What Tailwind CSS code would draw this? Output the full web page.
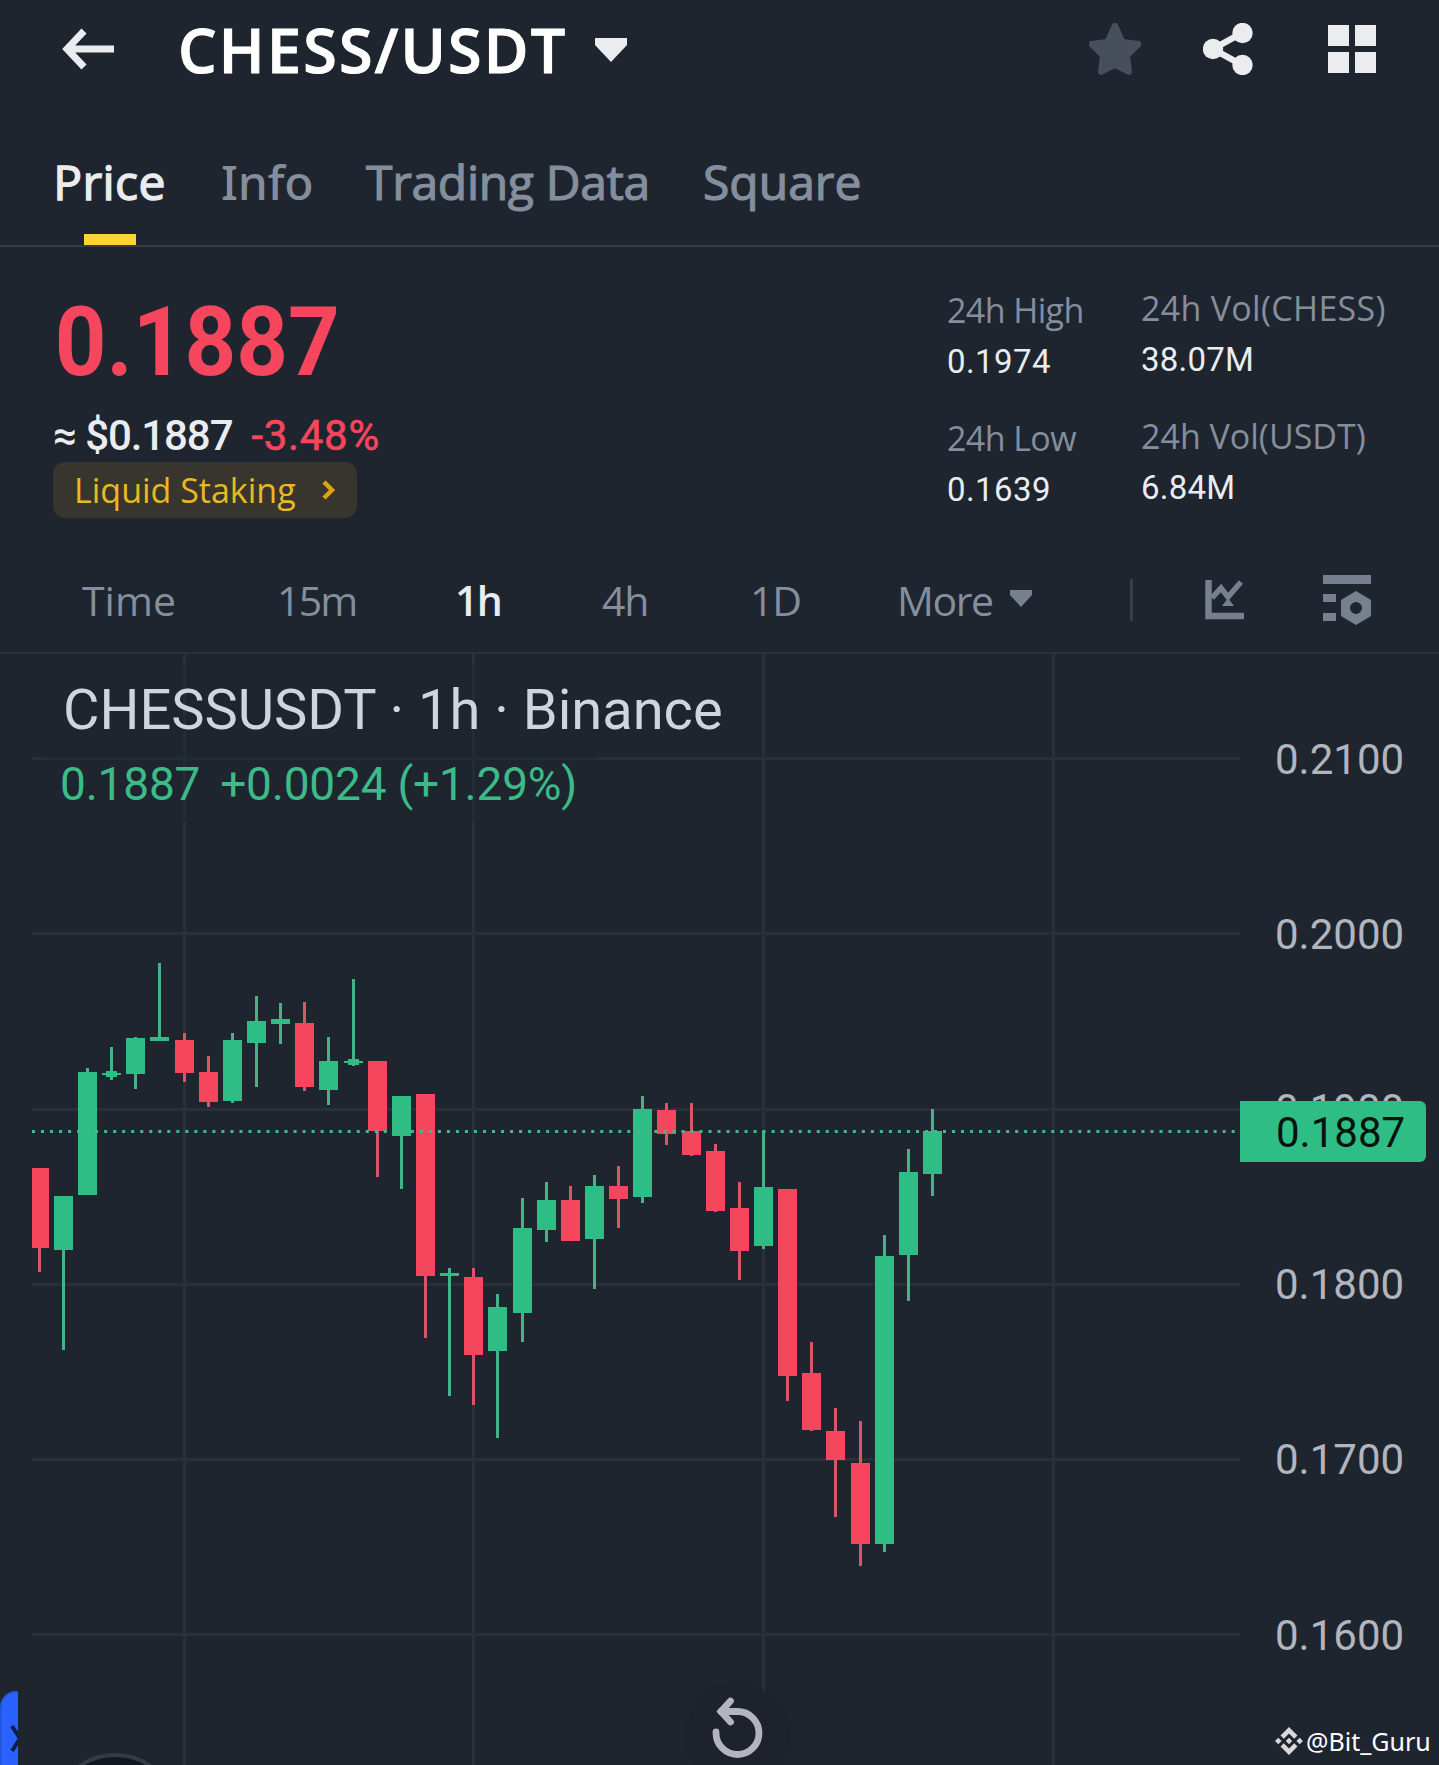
<!DOCTYPE html>
<html lang="en">

<head>
    <meta charset="UTF-8">
    <meta name="viewport" content="width=device-width, initial-scale=1.0">
    <title>CHESS/USDT</title>
    <script src="https://cdn.jsdelivr.net/npm/@tailwindcss/browser@4"></script>
</head>

<body class="bg-[#1f252f] font-['Open_Sans',sans-serif]">
    <div class="w-[1439px] h-[1765px] overflow-hidden flex flex-col whitespace-nowrap leading-none">

        <!-- header -->
        <header class="h-[98px] shrink-0 flex items-center pl-[62px] pr-[63px] text-[#eaecef]">
            <svg class="w-[52px] h-[42px]" viewBox="0 0 52 42" fill="none" stroke="currentColor" stroke-width="7">
                <path d="M52 21H7M22 3L5 21l17 18" />
            </svg>
            <h1 class="ml-[64px] w-[417px] text-[61px] font-semibold text-white tracking-[2.2px] [-webkit-text-stroke:1px_white]">CHESS/USDT</h1>
            <svg class="w-8 h-6 mt-[2px]" viewBox="0 0 32 24" fill="currentColor">
                <path d="M0 0h32v7L16 24 0 7z" />
            </svg>
            <div class="ml-auto flex items-center">
                <svg class="w-[52px] h-[52px] text-[#474f5c]" viewBox="0 0 52 52" fill="currentColor" stroke="currentColor" stroke-width="4" stroke-linejoin="round">
                    <path d="M25 2h2l7 16 16 2v2L39 33l2 16-1 1-14-7-14 7-1-1 2-16L2 22v-2l16-2z" />
                </svg>
                <svg class="ml-[62px] w-[50px] h-[52px]" viewBox="0 0 50 52" fill="currentColor">
                    <path d="M39 10L10 26l29 16" fill="none" stroke="currentColor" stroke-width="6.5" />
                    <circle cx="10" cy="26" r="10.2" />
                    <circle cx="39.5" cy="10" r="10.2" />
                    <circle cx="39.5" cy="42" r="10.2" />
                </svg>
                <div class="ml-[75px] grid grid-cols-2 gap-[6px]">
                    <span class="size-[21px] bg-[#eaecef]"></span>
                    <span class="size-[21px] bg-[#eaecef]"></span>
                    <span class="size-[21px] bg-[#eaecef]"></span>
                    <span class="size-[21px] bg-[#eaecef]"></span>
                </div>
            </div>
        </header>

        <!-- tabs -->
        <nav class="h-[149px] shrink-0 border-b-2 border-[#333b47] pt-[60px] pl-[53px] grid grid-cols-[168px_145px_337px_200px] text-[48px] text-[#848e9c]">
            <div class="w-[113px] flex flex-col items-center justify-between text-[#eaecef]">
                <span class="tracking-[0.4px] [-webkit-text-stroke:1.4px_#eaecef]">Price</span>
                <span class="w-[52px] h-[11px] bg-[#fcd535]"></span>
            </div>
            <span class="font-['Noto_Sans',sans-serif] font-medium tracking-[-0.3px]">Info</span>
            <span class="tracking-[-0.3px] [-webkit-text-stroke:1.2px_#848e9c]">Trading Data</span>
            <span class="[-webkit-text-stroke:1.2px_#848e9c]">Square</span>
        </nav>

        <!-- price + 24h stats -->
        <section class="h-[300px] shrink-0 flex pl-[53px]">
            <div class="w-[894px] pt-[47px] flex flex-col items-start">
                <div class="pl-[2px] origin-left scale-x-93 font-[Roboto,sans-serif] text-[97px] font-bold text-[#f6465d]">0.1887</div>
                <div class="mt-[24px] flex gap-[19px] font-[Roboto,sans-serif] text-[42px] font-medium text-[#eaecef]">
                    <span class="tracking-[-1.1px]">≈ $0.1887</span>
                    <span class="font-normal text-[#f6465d] tracking-[0.7px] [-webkit-text-stroke:0.6px_#f6465d]">-3.48%</span>
                </div>
                <div class="mt-[5px] h-14 w-[304px] rounded-xl bg-[#37352d] flex items-center justify-between pl-[21px] pr-[20px] text-[34px] text-[#e8b923]">
                    <span>Liquid Staking</span>
                    <svg class="w-[16px] h-[20px] text-[#dba50f]" viewBox="0 0 16 20" fill="none" stroke="currentColor" stroke-width="4.5">
                        <path d="M3 2l8 8-8 8" />
                    </svg>
                </div>
            </div>
            <div class="w-[194px] pt-[46px] flex flex-col text-[34px] text-[#848e9c]">
                <span class="tracking-[-0.6px]">24h High</span>
                <span class="mt-[18px] font-[Roboto,sans-serif] text-[33px] tracking-[0.4px] text-[#eaecef]">0.1974</span>
                <span class="mt-[43px] tracking-[-0.6px]">24h Low</span>
                <span class="mt-[18px] font-[Roboto,sans-serif] text-[33px] tracking-[0.4px] text-[#eaecef]">0.1639</span>
            </div>
            <div class="pt-[44px] flex flex-col text-[34px] text-[#848e9c]">
                <span class="tracking-[0.3px]">24h Vol(CHESS)</span>
                <span class="mt-[18px] font-[Roboto,sans-serif] text-[33px] tracking-[0.2px] text-[#eaecef]">38.07M</span>
                <span class="mt-[43px]">24h Vol(USDT)</span>
                <span class="mt-[18px] font-[Roboto,sans-serif] text-[33px] tracking-[0.2px] text-[#eaecef]">6.84M</span>
            </div>
        </section>

        <!-- intervals -->
        <div class="h-[107px] shrink-0 border-b-2 border-[#2a313c] flex items-center pl-[82px] text-[41px] text-[#848e9c]">
            <div class="mt-[2px] grid grid-cols-[195px_178px_147px_148px_147px_111px]">
                <span>Time</span>
                <span class="tracking-[-1.8px]">15m</span>
                <span class="font-semibold tracking-[-1.8px] text-[#eaecef]">1h</span>
                <span class="tracking-[-1.2px]">4h</span>
                <span class="tracking-[-1.2px]">1D</span>
                <span class="tracking-[-1.4px]">More</span>
            </div>
            <svg class="w-[22px] h-[17px] ml-[2px] mb-[3px]" viewBox="0 0 22 17" fill="#76808f">
                <path d="M0 0h22v5L11 17 0 5z" />
            </svg>
            <span class="ml-[98px] w-[3px] h-[42px] bg-[#373e49]"></span>
            <svg class="ml-[72px] w-[39px] h-[40px]" viewBox="0 0 39 40" fill="none" stroke="#76808f" stroke-width="6.5">
                <path d="M3.5 0v36H39" />
                <path d="M7 18l9-10 7 9L36 2" stroke-width="5.500" />
                <path d="M23 18l6 8H17z" fill="#76808f" stroke="none" />
            </svg>
            <svg class="ml-[79px] mt-[1px] w-[48px] h-[50px]" viewBox="0 0 48 50" fill="#76808f">
                <path d="M0 0h48v9H0zM0 19h13v8H0zM0 38h13v8H0z" />
                <path fill-rule="evenodd" d="M33 16l15 9v16l-15 9-15-9V25zm0 11a6 6 0 1 0 0 12 6 6 0 0 0 0-12z" />
            </svg>
        </div>

        <!-- chart -->
        <main class="relative grow flex font-[Roboto,sans-serif]">
            <svg id="chart" class="w-[1240px] h-[1111px] shrink-0" viewBox="0 654 1240 1111">
                <g fill="#2a3039">
                    <path d="M183 654h3v1111h-3zM472 654h3v1111h-3zM762 654h3v1111h-3zM1052 654h3v1111h-3z" />
                    <path d="M32 757h1208v3H32zM32 932h1208v3H32zM32 1108h1208v3H32zM32 1283h1208v3H32zM32 1458h1208v3H32zM32 1633h1208v3H32z" />
                </g>
                <g id="candles"></g>
                <path d="M32 1131.5h1208" stroke="#4bb58a" stroke-width="3" stroke-dasharray="3 6.02" />
            </svg>
            <div class="pt-[18px] pl-[35px] text-[42px] text-[#b2b5be]">
                <div class="h-[175.2px] flex items-center">0.2100</div>
                <div class="h-[175.2px] flex items-center">0.2000</div>
                <div class="h-[175.2px] flex items-center">0.1900</div>
                <div class="h-[175.2px] flex items-center">0.1800</div>
                <div class="h-[175.2px] flex items-center">0.1700</div>
                <div class="h-[175.2px] flex items-center">0.1600</div>
            </div>
            <div class="absolute left-[1240px] top-[447px] w-[186px] h-[61px] rounded-r-md bg-[#2ebd85] pl-[36px] pt-[2px] flex items-center text-[42px] text-[#06120d]">0.1887</div>

            <!-- legend, dims the grid under it -->
            <div class="absolute left-[46px] top-[10px] flex flex-col items-start">
                <div class="h-[80px] pl-[17px] pt-[18px] bg-[#1f252f]/50 text-[56px] text-[#d1d4dc]">CHESSUSDT · 1h · Binance</div>
                <div class="h-[78px] w-[551px] pl-[14px] pt-[17px] bg-[#1f252f]/50 flex gap-[20px] text-[46px] tracking-[-0.2px] text-[#3cbb89]">
                    <span>0.1887</span>
                    <span>+0.0024 (+1.29%)</span>
                </div>
            </div>

            <!-- reset view -->
            <div class="absolute left-[688px] top-[1030px] size-[100px] rounded-full bg-[#1e222d] shadow-[0_2px_6px_rgba(0,0,0,0.15)]">
                <svg class="size-[100px]" viewBox="688 1684 100 100" fill="none" stroke="#b2b5be" stroke-width="6.8" stroke-linecap="round">
                    <path d="M721 1711.5h16.500a21.500 21.500 0 1 1-21.500 21.500v-1" />
                    <path d="M730.500 1701l-9.500 10.500 9.500 10.500" stroke-linejoin="miter" />
                </svg>
            </div>

            <!-- left side handle -->
            <div class="absolute left-0 top-[1037px] w-[18px] h-[74px] rounded-tl-2xl bg-[#2962ff] border-l-2 border-t-2 border-[#2457e0] overflow-hidden">
                <svg class="w-[16px] h-[72px]" viewBox="2 1693 16 72" fill="none" stroke="#0c1c4d" stroke-width="4">
                    <path d="M12 1726l8 12.500-8 12.500" />
                </svg>
            </div>
            <div class="absolute left-[52px] top-[1099px] size-[126px] rounded-full bg-[#131722] border-4 border-[#363a45]"></div>

            <div class="absolute left-[1275px] top-[1073px] flex items-center gap-[3px] font-['Noto_Sans',sans-serif] text-[25px] text-white">
                <svg class="size-7" viewBox="0 0 28 28" fill="#d9d9da">
                    <path d="M14 0l8.500 8.500-3.300 3.300L14 6.600l-5.200 5.200-3.300-3.300zM14 28l8.500-8.500-3.300-3.300-5.200 5.200-5.200-5.200-3.300 3.300zM14 10.800l3.200 3.200-3.200 3.200-3.200-3.200zM3.300 10.700L6.600 14l-3.300 3.300L0 14zM24.700 10.700L28 14l-3.300 3.300-3.300-3.300z" />
                </svg>
                <span>@Bit_Guru</span>
            </div>
        </main>
    </div>

    <script>
        // [left, bodyTop, bodyBottom, high, low, up]
        const candles = [
            [30, 1168, 1248, 1168, 1272, 0],
            [54, 1196, 1250, 1196, 1350, 1],
            [78, 1072, 1195, 1068, 1195, 1],
            [102, 1073, 1075, 1047, 1080, 1],
            [126, 1038, 1074, 1037, 1089, 1],
            [150, 1037, 1041, 963, 1041, 1],
            [175, 1040, 1073, 1033, 1082, 0],
            [199, 1072, 1102, 1056, 1107, 0],
            [223, 1040, 1101, 1033, 1103, 1],
            [247, 1021, 1043, 996, 1087, 1],
            [271, 1019, 1024, 1003, 1044, 1],
            [295, 1023, 1087, 1002, 1091, 0],
            [319, 1061, 1090, 1037, 1105, 1],
            [344, 1061, 1063, 979, 1066, 1],
            [368, 1061, 1131, 1061, 1177, 0],
            [392, 1096, 1136, 1096, 1189, 1],
            [416, 1094, 1276, 1094, 1338, 0],
            [440, 1273, 1276, 1268, 1396, 1],
            [464, 1277, 1355, 1268, 1405, 0],
            [488, 1307, 1351, 1294, 1438, 1],
            [513, 1228, 1313, 1198, 1342, 1],
            [537, 1200, 1230, 1182, 1242, 1],
            [561, 1200, 1241, 1186, 1241, 0],
            [585, 1186, 1239, 1175, 1289, 1],
            [609, 1186, 1199, 1166, 1228, 0],
            [633, 1109, 1197, 1096, 1203, 1],
            [657, 1110, 1134, 1103, 1145, 0],
            [682, 1131, 1155, 1103, 1156, 0],
            [706, 1151, 1211, 1144, 1212, 0],
            [730, 1208, 1251, 1182, 1280, 0],
            [754, 1187, 1246, 1131, 1249, 1],
            [778, 1189, 1376, 1189, 1401, 0],
            [802, 1373, 1430, 1342, 1431, 0],
            [826, 1431, 1460, 1408, 1517, 0],
            [851, 1463, 1544, 1421, 1566, 0],
            [875, 1256, 1544, 1235, 1552, 1],
            [899, 1172, 1255, 1149, 1301, 1],
            [923, 1131, 1174, 1109, 1196, 1],
        ];

        document.getElementById('candles').innerHTML = candles.map(([x, top, bottom, high, low, up]) => {
            const color = up ? '#2ebd85' : '#f6465d';
            const wick = up ? '#46b287' : '#d9566a';
            const left = Math.max(x, 32);
            // flat candles get a small bulge in the middle
            const doji = bottom - top === 2 ? `<rect x="${x + 4}" y="${top - 2}" width="11" height="6" fill="${color}" />` : '';
            return `<rect x="${x + 8}" y="${high}" width="3" height="${low - high}" fill="${wick}" />
                <rect x="${left}" y="${top}" width="${x + 19 - left}" height="${bottom - top}" fill="${color}" />${doji}`;
        }).join('');
    </script>
</body>

</html>
